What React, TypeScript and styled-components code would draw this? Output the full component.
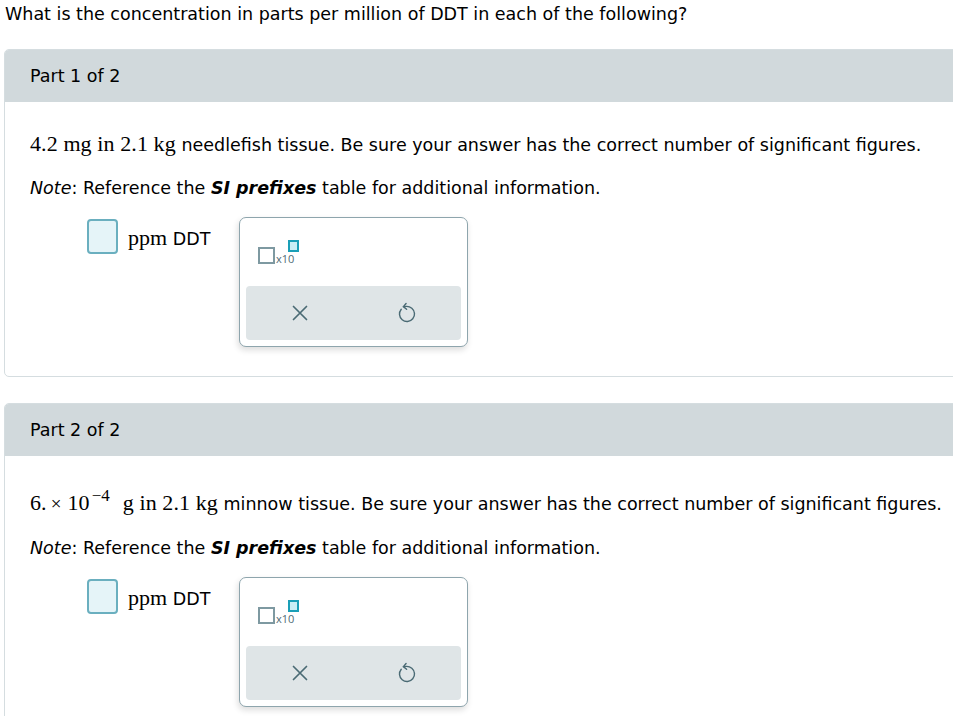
import React from "react";
import styled, { createGlobalStyle } from "styled-components";
import { RotateCcw } from "lucide-react";

const Global = createGlobalStyle`
  html, body { margin: 0; padding: 0; overflow: hidden; background: #fff; }
  body { font-family: "DejaVu Sans", Verdana, sans-serif; color: #000; }
`;

const Page = styled.div`
  padding: 0 0 0 4px;
  width: 1000px;
`;

const Title = styled.div`
  font-size: 17.5px;
  line-height: 20px;
  padding: 4px 0 0 1px;
  margin-bottom: 25px;
`;

const Card = styled.section<{ $gap?: number }>`
  border: 1px solid #d5dde0;
  border-radius: 5px;
  margin-bottom: ${(p) => p.$gap ?? 0}px;
  overflow: hidden;
`;

const CardHeader = styled.div`
  background: #d1d9dc;
  height: 52px;
  display: flex;
  align-items: center;
  padding-left: 25px;
  font-size: 17.5px;
`;

const CardBody = styled.div<{ $top: number; $bottom: number }>`
  padding: ${(p) => p.$top}px 25px ${(p) => p.$bottom}px 25px;
`;

const Question = styled.p`
  margin: 0;
  font-size: 17.5px;
  line-height: 24px;
  display: flex;
  align-items: baseline;
  white-space: nowrap;
`;

const Serif = styled.span`
  font-family: "Liberation Serif", "Times New Roman", serif;
  font-size: 22px;
  white-space: pre;
  letter-spacing: 0.1px;
`;

const Times = styled.span`
  font-family: "Liberation Serif", "Times New Roman", serif;
  font-size: 19px;
  margin: 0 6px 0 4px;
`;

const Sup = styled.sup`
  font-family: "Liberation Serif", "Times New Roman", serif;
  font-size: 17px;
  position: relative;
  top: -9px;
  margin-left: 2px;
  margin-right: 13px;
`;

const Note = styled.p`
  margin: 19px 0 0 0;
  font-size: 17.5px;
  line-height: 24px;
  em { font-style: italic; }
  b { font-weight: bold; font-style: italic; }
`;

const AnswerRow = styled.div`
  display: flex;
  align-items: flex-start;
  margin-top: 17px;
  padding-left: 57px;
`;

const InputBox = styled.div`
  width: 31px;
  height: 35px;
  box-sizing: border-box;
  border: 2px solid #6aafbf;
  border-radius: 4px;
  background: #e5f4f8;
  margin-top: 2px;
`;

const Unit = styled.div`
  margin-left: 10px;
  margin-top: 11px;
  font-size: 17.5px;
  line-height: 20px;
  width: 111px;
  white-space: nowrap;
`;

const UnitSerif = styled.span`
  font-family: "Liberation Serif", "Times New Roman", serif;
  font-size: 22px;
`;

const Panel = styled.div`
  width: 229px;
  height: 130px;
  box-sizing: border-box;
  border: 1px solid #8ea5ad;
  border-radius: 7px;
  background: #fff;
  box-shadow: -1px 3px 6px rgba(0, 0, 0, 0.14);
  padding: 6px;
  display: flex;
  flex-direction: column;
`;

const Palette = styled.div`
  height: 62px;
  display: flex;
  align-items: flex-start;
  padding: 14px 0 0 12px;
  box-sizing: border-box;
`;

const SciIcon = styled.div`
  display: flex;
  align-items: flex-end;
  height: 26px;
`;

const BaseBox = styled.div`
  width: 17px;
  height: 17px;
  box-sizing: border-box;
  border: 2px solid #7e99a1;
`;

const Ten = styled.span`
  font-family: "Open Sans", "DejaVu Sans", sans-serif;
  font-size: 11px;
  line-height: 10px;
  color: #4e6b74;
  margin-left: 1px;
`;

const ExpBox = styled.div`
  width: 11px;
  height: 12px;
  box-sizing: border-box;
  border: 2px solid #1a9fb7;
  background: #c9eef5;
  align-self: flex-start;
  margin-left: -6px;
  margin-top: 2px;
`;

const ButtonBar = styled.div`
  flex: 1;
  background: #dfe5e7;
  border-radius: 4px;
  display: flex;
`;

const BarButton = styled.div`
  flex: 1;
  display: flex;
  align-items: center;
  justify-content: center;
  color: #4a6a74;
`;

const UndoGlyph = styled(RotateCcw)`
  transform: rotate(40deg);
  margin-top: 2px;
`;

const XIcon = () => (
  <svg width="16" height="16" viewBox="0 0 16 16" fill="none" stroke="currentColor" strokeWidth="1.7" strokeLinecap="round">
    <path d="M1.5 1.5 L14.5 14.5 M14.5 1.5 L1.5 14.5" />
  </svg>
);

type PartProps = {
  label: string;
  question: React.ReactNode;
  gap?: number;
  top: number;
};

const AnswerArea = () => (
  <AnswerRow>
    <InputBox />
    <Unit>
      <UnitSerif>ppm</UnitSerif> DDT
    </Unit>
    <Panel>
      <Palette>
        <SciIcon>
          <BaseBox />
          <Ten>x10</Ten>
          <ExpBox />
        </SciIcon>
      </Palette>
      <ButtonBar>
        <BarButton>
          <XIcon />
        </BarButton>
        <BarButton>
          <UndoGlyph size={20} strokeWidth={1.7} />
        </BarButton>
      </ButtonBar>
    </Panel>
  </AnswerRow>
);

const Part = ({ label, question, gap, top }: PartProps) => (
  <Card $gap={gap}>
    <CardHeader>{label}</CardHeader>
    <CardBody $top={top} $bottom={29}>
      <Question>{question}</Question>
      <Note>
        <em>Note</em>: Reference the <b>SI prefixes</b> table for additional information.
      </Note>
      <AnswerArea />
    </CardBody>
  </Card>
);

export default function App() {
  return (
    <>
      <Global />
      <Page>
        <Title>What is the concentration in parts per million of DDT in each of the following?</Title>
        <Part
          label="Part 1 of 2"
          gap={26}
          top={30}
          question={
            <>
              <Serif>4.2 mg in 2.1 kg </Serif>
              needlefish tissue. Be sure your answer has the correct number of significant figures.
            </>
          }
        />
        <Part
          label="Part 2 of 2"
          top={35}
          question={
            <>
              <Serif>6.</Serif>
              <Times>×</Times>
              <Serif>10</Serif>
              <Sup>−4</Sup>
              <Serif>g in 2.1 kg </Serif>
              minnow tissue. Be sure your answer has the correct number of significant figures.
            </>
          }
        />
      </Page>
    </>
  );
}
